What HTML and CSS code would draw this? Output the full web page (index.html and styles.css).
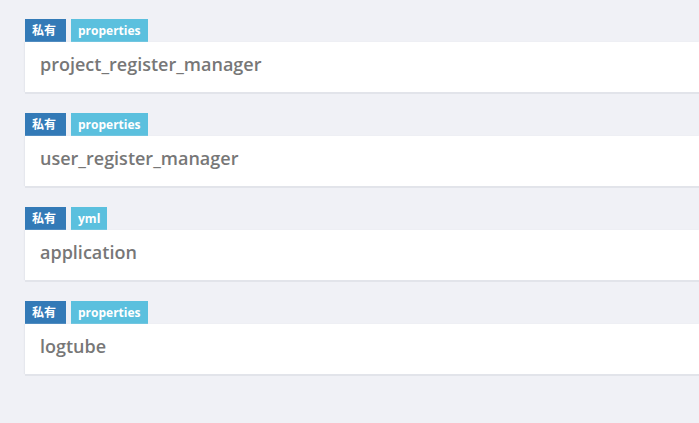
FILE: index.html
```html
<!DOCTYPE html>
<html>
<head>
<meta charset="utf-8">
<link rel="stylesheet" href="styles.css">
</head>
<body>
<div class="list">
  <div class="item">
    <div class="tags"><span class="tag tag-private">私有</span><span class="tag tag-type">properties</span></div>
    <div class="card">project_register_manager</div>
  </div>
  <div class="item">
    <div class="tags"><span class="tag tag-private">私有</span><span class="tag tag-type">properties</span></div>
    <div class="card">user_register_manager</div>
  </div>
  <div class="item">
    <div class="tags"><span class="tag tag-private">私有</span><span class="tag tag-type">yml</span></div>
    <div class="card">application</div>
  </div>
  <div class="item">
    <div class="tags"><span class="tag tag-private">私有</span><span class="tag tag-type">properties</span></div>
    <div class="card">logtube</div>
  </div>
</div>
</body>
</html>
```
FILE: styles.css
```css
html, body {
  margin: 0;
  padding: 0;
  background: #f0f1f6;
  font-family: "Open Sans", "Noto Sans CJK SC", sans-serif;
  overflow: hidden;
}
.list {
  display: flex;
  flex-direction: column;
  gap: 19px;
  padding: 19px 0 0 25px;
}
.item {
  display: flex;
  flex-direction: column;
}
.tags {
  display: flex;
  gap: 5px;
  height: 23px;
}
.tag {
  display: flex;
  align-items: center;
  padding: 0 7px;
  color: #fff;
  font-size: 12px;
  font-weight: 700;
  line-height: 1;
}
.tag-private {
  background: #337ab7;
  padding-right: 10px;
}
.tag-type {
  background: #5bc0de;
}
.card {
  background: #fff;
  height: 50px;
  line-height: 45px;
  padding-left: 15px;
  font-size: 18px;
  font-weight: 600;
  color: #777;
  box-shadow: 0 2px 0 #e2e4ea, -1px 0 1px #e6e8ee;
  margin-bottom: 2px;
}
```
